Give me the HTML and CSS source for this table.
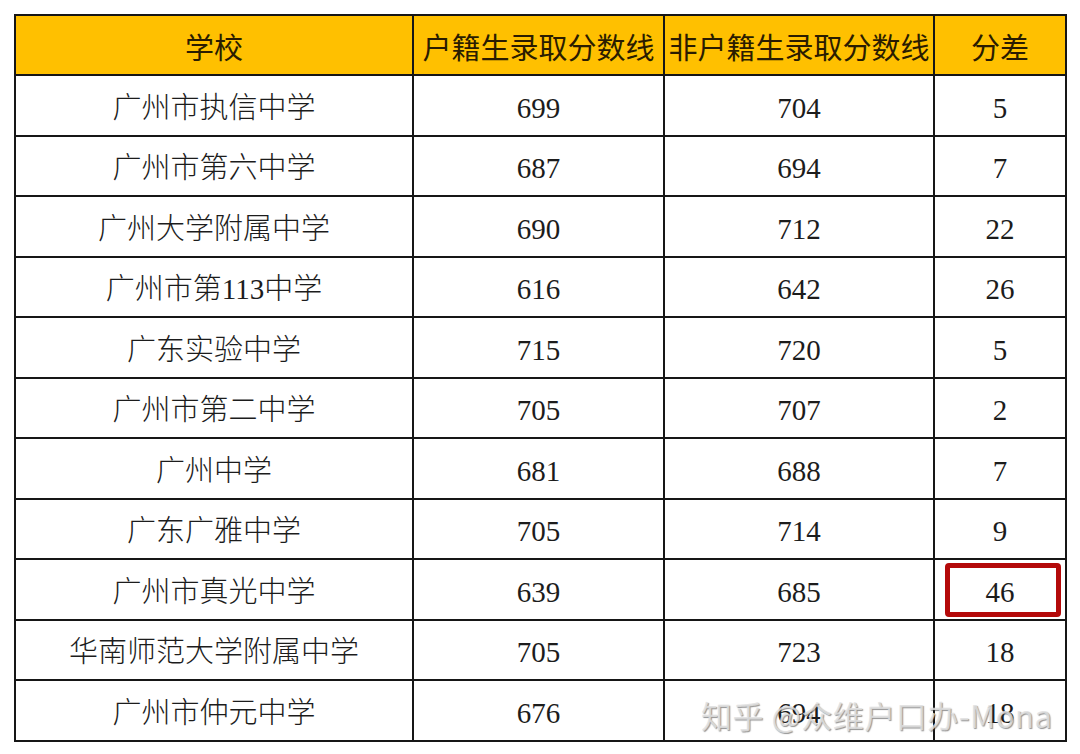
FILE: index.html
```html
<!DOCTYPE html>
<html lang="zh">
<head>
<meta charset="utf-8">
<link rel="stylesheet" href="styles.css">
</head>
<body>
<div class="page">
  <table class="scores">
    <colgroup>
      <col class="c1"><col class="c2"><col class="c3"><col class="c4">
    </colgroup>
    <thead>
      <tr><th>学校</th><th>户籍生录取分数线</th><th>非户籍生录取分数线</th><th>分差</th></tr>
    </thead>
    <tbody>
      <tr><td>广州市执信中学</td><td>699</td><td>704</td><td>5</td></tr>
      <tr><td>广州市第六中学</td><td>687</td><td>694</td><td>7</td></tr>
      <tr><td>广州大学附属中学</td><td>690</td><td>712</td><td>22</td></tr>
      <tr><td>广州市第113中学</td><td>616</td><td>642</td><td>26</td></tr>
      <tr><td>广东实验中学</td><td>715</td><td>720</td><td>5</td></tr>
      <tr><td>广州市第二中学</td><td>705</td><td>707</td><td>2</td></tr>
      <tr><td>广州中学</td><td>681</td><td>688</td><td>7</td></tr>
      <tr><td>广东广雅中学</td><td>705</td><td>714</td><td>9</td></tr>
      <tr><td>广州市真光中学</td><td>639</td><td>685</td><td class="mark">46<span class="ring"></span></td></tr>
      <tr><td>华南师范大学附属中学</td><td>705</td><td>723</td><td>18</td></tr>
      <tr><td>广州市仲元中学</td><td>676</td><td>694</td><td>18</td></tr>
    </tbody>
  </table>
  <div class="watermark">知乎 @众维户口办-Mona</div>
</div>
</body>
</html>
```
FILE: styles.css
```css
html, body {
  margin: 0;
  padding: 0;
  background: #ffffff;
}
.page {
  position: relative;
  width: 1080px;
  height: 754px;
  padding: 14px 0 0 14px;
  box-sizing: border-box;
}
.scores {
  border-collapse: collapse;
  table-layout: fixed;
  width: 1051px;
  font-family: "Liberation Serif", "Noto Sans CJK SC", serif;
  font-size: 29px;
  font-weight: 300;
  color: #1c1c1c;
}
.c1 { width: 398px; }
.c2 { width: 251px; }
.c3 { width: 270px; }
.c4 { width: 132px; }
.scores th, .scores td {
  border: 2px solid #161616;
  text-align: center;
  padding: 0;
  white-space: nowrap;
  overflow: hidden;
}
.scores thead tr { height: 60px; }
.scores th {
  background: #ffc000;
  color: #2a1c00;
  font-weight: 400;
  padding-top: 2px;
}
.scores tbody tr { height: 60.5px; }
.scores td { padding-top: 6px; line-height: 1; }
.mark { position: relative; }
.ring {
  position: absolute;
  left: 10px;
  right: 4px;
  top: 3px;
  bottom: 2px;
  border: 5px solid #b40a0a;
  border-radius: 4px;
}
.watermark {
  position: absolute;
  left: 701px;
  top: 692px;
  font-family: "Noto Sans CJK SC", "Liberation Sans", sans-serif;
  font-size: 31px;
  color: rgba(225, 225, 225, 0.85);
  text-shadow: 1px 1px 1px rgba(60, 60, 60, 0.55);
  white-space: nowrap;
  letter-spacing: 0.5px;
}
```
